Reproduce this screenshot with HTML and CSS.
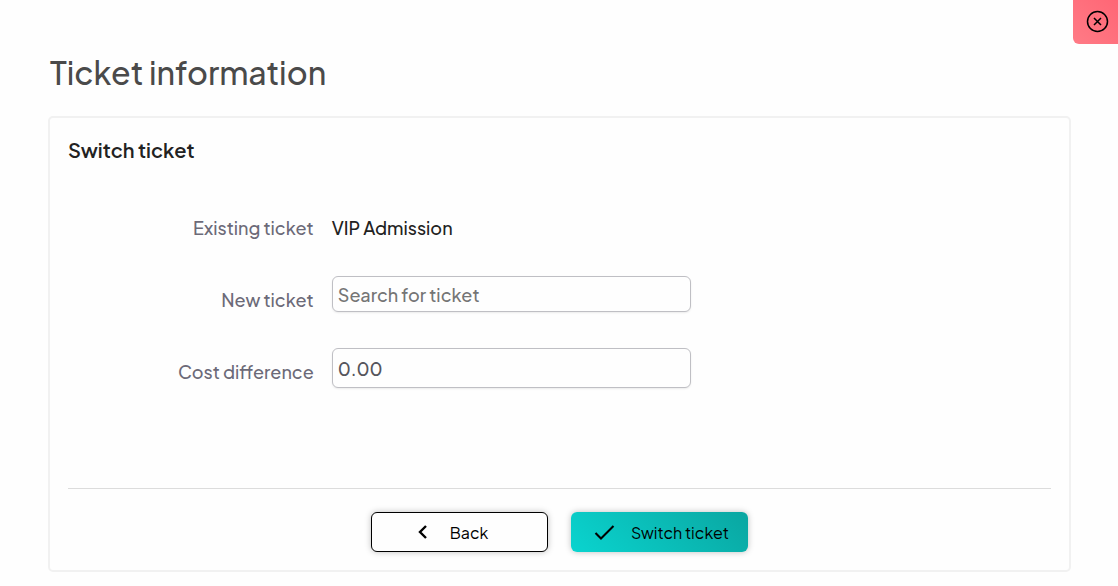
FILE: index.html
```html
<!DOCTYPE html>
<html lang="en">

<head>
    <meta charset="UTF-8">
    <meta name="viewport" content="width=device-width, initial-scale=1.0">
    <title>Ticket information</title>
    <link rel="stylesheet" href="styles.css">
</head>

<body>
    <button type="button" class="close-btn" aria-label="Close">
        <svg width="24" height="24" viewBox="0 0 24 24" fill="none" stroke="currentColor" stroke-width="1.5">
            <circle cx="12.5" cy="12.5" r="10" />
            <path d="M9 9l7 7M16 9l-7 7" />
        </svg>
    </button>

    <main class="page">
        <h1>Ticket information</h1>

        <form class="panel">
            <h2>Switch ticket</h2>

            <div class="fields">
                <div class="field">
                    <span class="field-label">Existing ticket</span>
                    <span class="field-value">VIP Admission</span>
                </div>
                <div class="field">
                    <label class="field-label" for="newTicket">New ticket</label>
                    <input class="field-input" type="text" id="newTicket" placeholder="Search for ticket">
                </div>
                <div class="field">
                    <label class="field-label" for="costDifference">Cost difference</label>
                    <input class="field-input field-input-cost" type="text" id="costDifference" value="0.00">
                </div>
            </div>

            <div class="actions">
                <button type="button" class="btn btn-back">
                    <svg width="24" height="24" viewBox="0 0 24 24" fill="none" stroke="currentColor" stroke-width="2.4">
                        <path d="M15 6l-6 6 6 6" />
                    </svg>
                    Back
                </button>
                <button type="submit" class="btn btn-switch">
                    <svg width="24" height="24" viewBox="0 0 24 24" fill="none" stroke="currentColor" stroke-width="2.1">
                        <path d="M3.5 13l5.5 5.5L21.5 6" />
                    </svg>
                    Switch ticket
                </button>
            </div>
        </form>
    </main>
</body>

</html>
```
FILE: styles.css
```css
* {
    box-sizing: border-box;
}

body {
    margin: 0;
    background-color: #fefefe;
    font-family: "Plus Jakarta Sans", Inter, sans-serif;
    font-size: 18px;
    font-weight: 500;
    color: #222;
}

.close-btn {
    position: absolute;
    top: 0;
    right: 0;
    display: flex;
    align-items: center;
    justify-content: center;
    width: 45px;
    height: 44px;
    padding: 0 0 2px 3px;
    border: none;
    border-radius: 0 0 0 6px;
    background: linear-gradient(45deg, #ff7b86, #ff6675);
    color: #000;
    cursor: pointer;
}

.page {
    padding: 50px 47px 14px 48px;
}

h1 {
    margin: 0 0 22px 2px;
    font-size: 32px;
    line-height: 44px;
    font-weight: 500;
    color: #4a4a4a;
}

.panel {
    padding: 18px;
    border: 2px solid #f1f1f1;
    border-radius: 5px;
}

h2 {
    margin: 0;
    font-size: 20px;
    line-height: 28px;
    font-weight: 600;
}

.fields {
    display: flex;
    flex-direction: column;
    gap: 32px;
    padding: 40px 0 100px;
}

.field {
    display: grid;
    grid-template-columns: 25% minmax(0, 359px);
    column-gap: 18px;
    align-items: start;
    min-height: 40px;
    line-height: 40px;
}

.field-label {
    padding-top: 4px;
    height: 40px;
    text-align: right;
    color: #6c6a78;
}

.field-value {
    padding-top: 4px;
    height: 40px;
}

.field-input {
    width: 100%;
    height: 36px;
    padding: 2px 5px 0;
    border: 1px solid #bfbfc4;
    border-radius: 6px;
    background-color: #fefefe;
    box-shadow: 0 1px 2px rgba(0, 0, 0, 0.08);
    font: inherit;
    color: #55555c;
}

.field-input::placeholder {
    color: #757575;
}

.field-input-cost {
    height: 40px;
}

.actions {
    display: flex;
    justify-content: center;
    gap: 23px;
    padding-top: 23px;
    border-top: 1px solid #dcdcdc;
}

.btn {
    display: flex;
    align-items: center;
    justify-content: center;
    gap: 15px;
    width: 177px;
    height: 40px;
    padding: 0;
    border: 1px solid transparent;
    border-radius: 6px;
    box-shadow: 0 0 6px rgba(0, 0, 0, 0.25);
    font: inherit;
    font-size: 16px;
    font-weight: 400;
    color: #000;
    cursor: pointer;
}

.btn-back {
    padding-right: 20px;
    border-color: #000;
    background-color: #fefefe;
}

.btn-switch {
    padding-left: 2px;
    border: none;
    background: linear-gradient(45deg, #0ad4cf, #0aa6a1);
}
```
